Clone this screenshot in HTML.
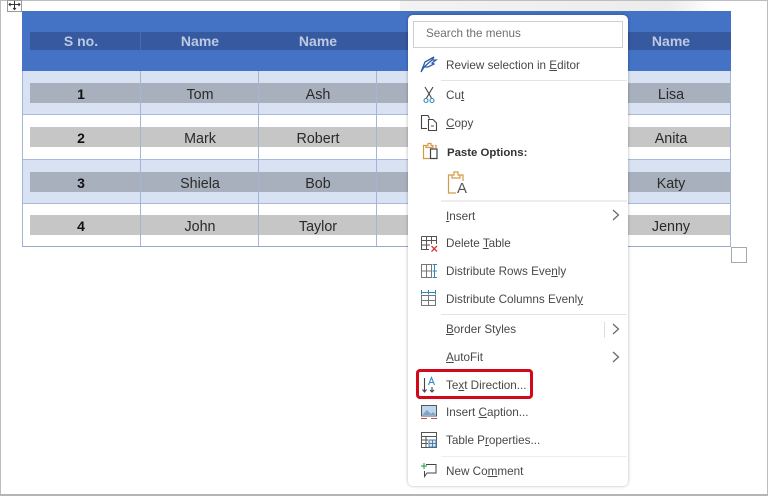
<!DOCTYPE html>
<html><head><meta charset="utf-8"><style>
html,body{margin:0;padding:0;background:#fff}
#p{position:relative;width:768px;height:496px;overflow:hidden;background:#fff;font-family:"Liberation Sans",sans-serif;filter:blur(.35px)}
.a{position:absolute}
.t{position:absolute;width:118px;margin-top:1px;text-align:center;font-size:14.3px;line-height:20px;color:#2a2a2a;white-space:nowrap}
.h{margin-top:0;color:#bccae2;font-weight:bold;font-size:14px}
.b{margin-top:0;font-weight:bold;color:#111;font-size:14px}
.m{position:absolute;left:446px;margin-top:1px;font-size:11.7px;line-height:16px;color:#484848;white-space:nowrap}
.m u{text-underline-offset:1px}
.s{position:absolute;height:1px;background:#e3e3e3;left:441px;width:186px}
.v{position:absolute;width:1px;background:#a3b6d8;top:71px;height:175px}
svg{position:absolute;overflow:visible}
</style></head><body><div id="p">
<div class="a" style="left:0;top:0;width:768px;height:1px;background:#bdbdbd"></div>
<div class="a" style="left:0;top:0;width:1px;height:496px;background:#bdbdbd"></div>
<div class="a" style="left:767px;top:0;width:1px;height:496px;background:#bdbdbd"></div>
<div class="a" style="left:0;top:494px;width:768px;height:2px;background:#b5b5b5"></div>

<!-- table -->
<div class="a" style="left:22px;top:11px;width:709px;height:60px;background:#4472c4"></div>
<div class="a" style="left:30px;top:32px;width:701px;height:18px;background:#36599f"></div>
<div class="a" style="left:140px;top:32px;width:1px;height:18px;background:#4a6cad"></div>
<div class="a" style="left:22px;top:71px;width:709px;height:43px;background:#d9e2f3"></div>
<div class="a" style="left:22px;top:159px;width:709px;height:44px;background:#d9e2f3"></div>
<div class="a" style="left:30px;top:83px;width:701px;height:20px;background:#a9b0bd"></div>
<div class="a" style="left:30px;top:127px;width:701px;height:20px;background:#c6c6c6"></div>
<div class="a" style="left:30px;top:172px;width:701px;height:20px;background:#a9b0bd"></div>
<div class="a" style="left:30px;top:215px;width:701px;height:20px;background:#c6c6c6"></div>
<div class="a" style="left:22px;top:114px;width:709px;height:1px;background:#a9bbdb"></div>
<div class="a" style="left:22px;top:159px;width:709px;height:1px;background:#a9bbdb"></div>
<div class="a" style="left:22px;top:203px;width:709px;height:1px;background:#a9bbdb"></div>
<div class="a" style="left:22px;top:246px;width:709px;height:1px;background:#98a8c6"></div>
<div class="v" style="left:22px"></div><div class="v" style="left:140px"></div><div class="v" style="left:258px"></div><div class="v" style="left:376px"></div><div class="v" style="left:730px"></div>

<div class="t h" style="left:22px;top:31px">S no.</div>
<div class="t h" style="left:141px;top:31px">Name</div>
<div class="t h" style="left:259px;top:31px">Name</div>
<div class="t h" style="left:612px;top:31px">Name</div>
<div class="t b" style="left:22px;top:84px">1</div><div class="t" style="left:141px;top:84px">Tom</div><div class="t" style="left:259px;top:84px">Ash</div><div class="t" style="left:612px;top:84px">Lisa</div>
<div class="t b" style="left:22px;top:128px">2</div><div class="t" style="left:141px;top:128px">Mark</div><div class="t" style="left:259px;top:128px">Robert</div><div class="t" style="left:612px;top:128px">Anita</div>
<div class="t b" style="left:22px;top:173px">3</div><div class="t" style="left:141px;top:173px">Shiela</div><div class="t" style="left:259px;top:173px">Bob</div><div class="t" style="left:612px;top:173px">Katy</div>
<div class="t b" style="left:22px;top:216px">4</div><div class="t" style="left:141px;top:216px">John</div><div class="t" style="left:259px;top:216px">Taylor</div><div class="t" style="left:612px;top:216px">Jenny</div>

<!-- handles -->
<div class="a" style="left:7px;top:0;width:13px;height:10px;border:1px solid #9a9a9a;background:#fff"></div>
<svg style="left:8px;top:0" width="14" height="11" fill="none" stroke="#333"><path d="M1 4.500H12M6.500 1V9M2.500 3L1 4.500 2.500 6M10.500 3L12 4.500 10.500 6M5 8L6.500 9.500 8 8"/></svg>
<div class="a" style="left:731px;top:247px;width:14px;height:14px;border:1px solid #a8a8a8;background:#fff"></div>

<!-- top shadow -->
<div class="a" style="left:400px;top:1px;width:315px;height:10px;background:linear-gradient(90deg,#f3f3f3 0%,#ececec 85%,#fff 100%)"></div>
<!-- menu -->
<div class="a" style="left:408px;top:15px;width:220px;height:471px;background:#fff;border-radius:5px;box-shadow:0 0 3px rgba(0,0,0,.3)"></div>
<div class="a" style="left:413px;top:21px;width:208px;height:25px;border:1px solid #cfcfcf;background:#fff"></div>
<div class="m" style="left:426px;top:25px;color:#707070">Search the menus</div>

<svg style="left:420px;top:55px" width="18" height="18" fill="none" stroke="#2f5cab" stroke-width="1.300"><path d="M1 17L5 7 14 2 12 5 16 5 12 8 14 9 8 12 4 12 1 17M4 12L12 5"/></svg>
<div class="m" style="top:57px">Review selection in <u>E</u>ditor</div>
<div class="s" style="top:80px"></div>

<svg style="left:423px;top:87px" width="13" height="17" fill="none" stroke-width="1.100"><path stroke="#444" d="M2 0L8.500 11M10 0L3.500 11"/><circle cx="3" cy="13.500" r="2" stroke="#2b88b8"/><circle cx="9" cy="13.500" r="2" stroke="#2b88b8"/></svg>
<div class="m" style="top:87px">Cu<u>t</u></div>

<svg style="left:421px;top:115px" width="17" height="16" fill="none" stroke="#444" stroke-width="1.100"><path d="M6 13.500H.5V.5H7L8.500 3.500"/><path d="M7.500 4.500H12L15.500 8V15.500H7.500Z"/><path stroke="#aaa" stroke-width="2" d="M10 11H13"/></svg>
<div class="m" style="top:115px"><u>C</u>opy</div>

<svg style="left:423px;top:143px" width="15" height="16" fill="none" stroke-width="1.200"><path stroke="#d39a45" d="M3 2.500H.5V15.500H7M12 2.500H13V5M3 2.500H5V.5H8V2.500H10V4.500H3Z"/><path stroke="#444" d="M7.500 6H14V15.500H7.500Z"/></svg>
<div class="m" style="top:144px;left:447px;font-weight:bold;font-size:11.4px;color:#333">Paste Options:</div>

<svg style="left:448px;top:171px" width="16" height="23" fill="none" stroke-width="1.200"><path stroke="#d39a45" d="M4 4H.5V22H8M12 4H15V10M4 4H6V1H10V4H12V7H4Z"/></svg>
<div class="m" style="left:457px;top:180px;margin-top:0;font-size:15px;color:#555;line-height:17px">A</div>
<div class="s" style="top:200px;background:#ededed;height:2px"></div>

<div class="m" style="top:208px"><u>I</u>nsert</div>
<svg style="left:612px;top:209px" width="9" height="12" fill="none" stroke="#666" stroke-width="1.200"><path d="M1 1L6.500 6 1 11"/></svg>

<svg style="left:421px;top:236px" width="17" height="16" fill="none" stroke="#555"><path d="M.5 .5H15.500V8M.5 .5V13.500H8M.5 4.500H15.500M.5 9H9M5.500 .5V13.500M10.500 .5V8"/><path stroke="#d9343b" stroke-width="1.300" d="M10.500 10L16 15.500M16 10L10.500 15.500"/></svg>
<div class="m" style="top:235px">Delete <u>T</u>able</div>

<svg style="left:421px;top:264px" width="16" height="14" fill="none"><path stroke="#777" d="M.5 .5H10.500V13.500H.5ZM.5 7H10.500M5.500 .5V13.500"/><path stroke="#2b88b8" d="M11.500 .5H16M11.500 13.500H16M11.500 7H16M13.500 1V13"/></svg>
<div class="m" style="top:263px">Distribute Rows Eve<u>n</u>ly</div>

<svg style="left:421px;top:290px" width="15" height="16" fill="none"><path stroke="#777" d="M.5 5.500H14.500V15.500H.5ZM.5 10.500H14.500M7.500 5.500V15.500"/><path stroke="#2b88b8" d="M.5 0V4.500M14.500 0V4.500M7.500 0V4.500M1 2.500H14"/></svg>
<div class="m" style="top:291px">Distribute Columns Evenl<u>y</u></div>
<div class="s" style="top:314px"></div>

<div class="m" style="top:321px"><u>B</u>order Styles</div>
<div class="a" style="left:604px;top:322px;width:1px;height:16px;background:#ddd"></div>
<svg style="left:612px;top:323px" width="9" height="12" fill="none" stroke="#666" stroke-width="1.200"><path d="M1 1L6.500 6 1 11"/></svg>
<div class="m" style="top:349px"><u>A</u>utoFit</div>
<svg style="left:612px;top:351px" width="9" height="12" fill="none" stroke="#666" stroke-width="1.200"><path d="M1 1L6.500 6 1 11"/></svg>

<div class="a" style="left:416px;top:369px;width:111px;height:24px;border:3px solid #d3091a;border-radius:4px"></div>
<svg style="left:422px;top:377px" width="14" height="16" fill="none" stroke="#444" stroke-width="1.100"><path d="M2.500 1V15M.5 12.500L2.500 15 4.500 12.500M10 10V15M8 13L10 15 12 13"/><path stroke="#3a8ec4" d="M6.500 8L9.500 .5 12.500 8M7.500 5.500H11.500"/></svg>
<div class="m" style="top:377px">Te<u>x</u>t Direction...</div>

<svg style="left:421px;top:405px" width="17" height="15" fill="none"><path fill="#bcd6ee" d="M1 1H15V10H1Z"/><path fill="#7aa6cf" d="M1 10L6 5 10 9 12 7 15 10Z"/><path stroke="#555" d="M.5 .5H15.500V11H.5Z"/><path stroke="#c0504d" d="M0 13.500H6M10 13.500H16"/></svg>
<div class="m" style="top:404px">Insert <u>C</u>aption...</div>

<svg style="left:421px;top:432px" width="17" height="16" fill="none" stroke="#555"><path d="M.5 .5H15.500V15.500H.5ZM.5 4.500H15.500M.5 8H7M.5 11.500H7M5 4.500V15.500"/><path stroke="#4a7fb0" fill="#dbe6f2" d="M8 8H15V15H8ZM8 11.500H15M11.500 8V15"/></svg>
<div class="m" style="top:432px">Table P<u>r</u>operties...</div>
<div class="s" style="top:456px;background:#ededed"></div>

<svg style="left:421px;top:463px" width="16" height="15" fill="none"><path stroke="#444" d="M5 1.500H15V10H6L3.500 13.500V8"/><path stroke="#3aa655" stroke-width="1.200" d="M3 0V6M0 3H6"/></svg>
<div class="m" style="top:463px">New Co<u>m</u>ment</div>
</div></body></html>
